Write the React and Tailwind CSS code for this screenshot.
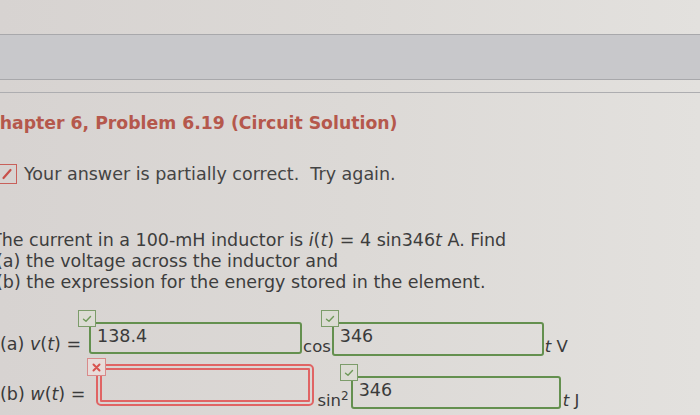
import React from "react";

function Check() {
  return (
    <div className="absolute left-[-11px] top-[-12px] w-[18px] h-[17px] border-[1.5px] border-[#7c9c6a] bg-[#dcdcd4] flex items-center justify-center">
      <svg width="10" height="8" viewBox="0 0 10 8">
        <path d="M1.5 4.2 L4 6.3 L8.5 1.5" fill="none" stroke="#6f9a5a" strokeWidth="1.4" strokeLinecap="round" strokeLinejoin="round" />
      </svg>
    </div>
  );
}

function Cross() {
  return (
    <div className="absolute left-[-9px] top-[-6px] w-[19px] h-[18px] border-[1.5px] border-[#d98a8a] bg-[#e8dcda] flex items-center justify-center z-10">
      <svg width="9" height="9" viewBox="0 0 9 9">
        <path d="M1.5 1.5 L7.5 7.5 M7.5 1.5 L1.5 7.5" fill="none" stroke="#d9534f" strokeWidth="2" strokeLinecap="round" />
      </svg>
    </div>
  );
}

function GreenBox({ w, h, value }) {
  return (
    <div className="relative shrink-0" style={{ width: w, height: h }}>
      <Check />
      <div className="w-full h-full border-[2.5px] border-[#64904f] rounded-[3px] pl-[6px] pt-[2px] text-[17.5px] leading-[21px] text-[#3b3b3b]">
        {value}
      </div>
    </div>
  );
}

export default function App() {
  return (
    <div
      className="w-[700px] h-[415px] overflow-hidden bg-linear-to-r from-[#d7d3d1] via-[#dcd9d6] to-[#e3e1de] text-[#3a3a3a]"
      style={{ fontFamily: '"DejaVu Sans", Verdana, sans-serif' }}
    >
      <div className="h-[34px]" />
      <div className="h-[46px] bg-[#c8c8cb] border-y border-[#a8a8ab]" />
      <div className="h-[13px] border-b border-[#adadb0]" />

      <h1 className="mt-[18px] ml-[-13px] text-[17.3px] leading-[24px] font-bold text-[#b5584c] whitespace-nowrap">
        Chapter 6, Problem 6.19 (Circuit Solution)
      </h1>

      <div className="mt-[28px] flex items-center gap-[7px]">
        <div className="ml-[-4px] w-[21px] h-[20px] border-[1.5px] border-[#c8605a] flex items-center justify-center">
          <svg width="12" height="12" viewBox="0 0 12 12">
            <path d="M2.5 10 L9.5 2" stroke="#c8504a" strokeWidth="2.2" strokeLinecap="round" />
          </svg>
        </div>
        <p className="text-[17.5px] leading-[22px] text-[#444] whitespace-pre">Your answer is partially correct.  Try again.</p>
      </div>

      <div className="mt-[45px] text-[17.5px] leading-[21px] text-[#3d3d3d] whitespace-nowrap">
        <p className="ml-[-9px]">
          The current in a 100-mH inductor is <i>i</i>(<i>t</i>) = 4 sin346<i>t</i> A. Find
        </p>
        <p className="ml-[-4px]">(a) the voltage across the inductor and</p>
        <p className="ml-[-4px]">(b) the expression for the energy stored in the element.</p>
      </div>

      <div className="mt-[29px] flex items-end text-[17.5px] text-[#3a3a3a]">
        <span className="leading-none mb-[3px] whitespace-nowrap">(a) <i>v</i>(<i>t</i>) =</span>
        <div className="ml-[8px] mb-[2px]">
          <GreenBox w={213} h={32} value="138.4" />
        </div>
        <span className="ml-[1px] text-[16.5px] leading-none mb-[1px]">cos</span>
        <div className="ml-[1px]">
          <GreenBox w={212} h={34} value="346" />
        </div>
        <span className="ml-[1px] text-[16.5px] leading-none mb-[1px] whitespace-nowrap"><i>t</i> V</span>
      </div>

      <div className="mt-[8px] flex items-end text-[17.5px] text-[#3a3a3a]">
        <span className="leading-none mb-[6px] whitespace-nowrap">(b) <i>w</i>(<i>t</i>) =</span>
        <div className="relative ml-[11px] mb-[3px] w-[218px] h-[42px] shrink-0">
          <Cross />
          <div className="w-full h-full border-[6px] border-double border-[#e06464] rounded-[5px]" />
        </div>
        <span className="ml-[3px] text-[16.5px] leading-none mb-[0px] whitespace-nowrap">
          sin<sup className="text-[12px]">2</sup>
        </span>
        <div className="ml-[2px]">
          <GreenBox w={210} h={33} value="346" />
        </div>
        <span className="ml-[2px] text-[16.5px] leading-none mb-[0px] whitespace-nowrap"><i>t</i> J</span>
      </div>
    </div>
  );
}
